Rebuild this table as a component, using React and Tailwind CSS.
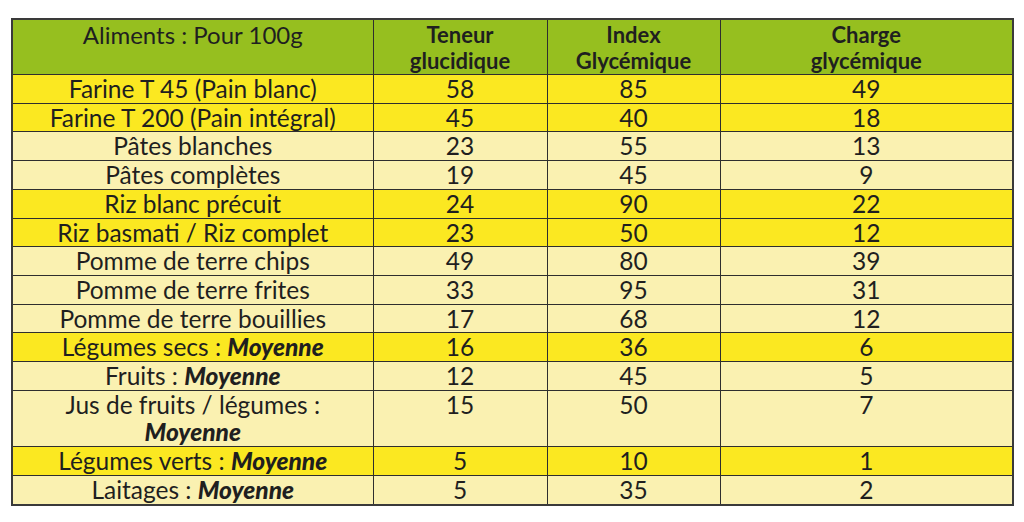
const rows = [
  { name: "Farine T 45 (Pain blanc)", t: 58, i: 85, c: 49, hi: true },
  { name: "Farine T 200 (Pain intégral)", t: 45, i: 40, c: 18, hi: true },
  { name: "Pâtes blanches", t: 23, i: 55, c: 13 },
  { name: "Pâtes complètes", t: 19, i: 45, c: 9 },
  { name: "Riz blanc précuit", t: 24, i: 90, c: 22, hi: true },
  { name: "Riz basmati / Riz complet", t: 23, i: 50, c: 12, hi: true },
  { name: "Pomme de terre chips", t: 49, i: 80, c: 39 },
  { name: "Pomme de terre frites", t: 33, i: 95, c: 31 },
  { name: "Pomme de terre bouillies", t: 17, i: 68, c: 12 },
  { name: "Légumes secs :", avg: true, t: 16, i: 36, c: 6, hi: true },
  { name: "Fruits :", avg: true, t: 12, i: 45, c: 5 },
  { name: "Jus de fruits / légumes :", avg: true, wrap: true, t: 15, i: 50, c: 7 },
  { name: "Légumes verts :", avg: true, t: 5, i: 10, c: 1, hi: true },
  { name: "Laitages :", avg: true, t: 5, i: 35, c: 2 },
];

const cell = "border border-[#2e2e2e] p-0 align-top text-center";

export default function App() {
  return (
    <div className="bg-white w-[1024px] h-[522px] pl-[11px] pt-[18px] text-[#1f1f1f] font-['Lato',_sans-serif]">
      <table className="w-[1001px] table-fixed border-collapse border-2 border-[#3a3a3a]">
        <colgroup>
          <col className="w-[361px]" />
          <col className="w-[174px]" />
          <col className="w-[173px]" />
          <col className="w-[293px]" />
        </colgroup>
        <thead>
          <tr className="bg-[#96bf1f]">
            <th className={`${cell} h-[55px] font-normal text-[24px] leading-[30px]`}>Aliments : Pour 100g</th>
            <th className={`${cell} pt-[2px] font-bold text-[22px] leading-[26px]`}>Teneur<br />glucidique</th>
            <th className={`${cell} pt-[2px] font-bold text-[22px] leading-[26px]`}>Index<br />Glycémique</th>
            <th className={`${cell} pt-[2px] font-bold text-[22px] leading-[26px]`}>Charge<br />glycémique</th>
          </tr>
        </thead>
        <tbody className="text-[24.5px] leading-[27.7px]">
          {rows.map((r) => (
            <tr key={r.name} className={r.hi ? "bg-[#fbe821]" : "bg-[#faf1b1]"}>
              <td className={cell}>
                {r.name}
                {r.avg && (
                  <>
                    {r.wrap ? <br /> : " "}
                    <b className="italic font-black">Moyenne</b>
                  </>
                )}
              </td>
              <td className={cell}>{r.t}</td>
              <td className={cell}>{r.i}</td>
              <td className={cell}>{r.c}</td>
            </tr>
          ))}
        </tbody>
      </table>
    </div>
  );
}
